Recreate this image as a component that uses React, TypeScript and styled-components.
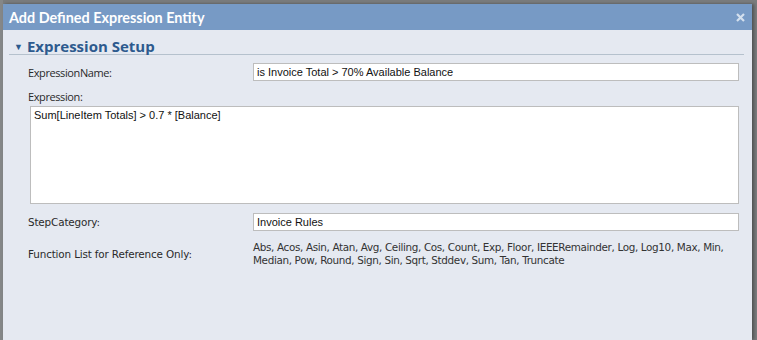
import React from "react";
import styled, { createGlobalStyle } from "styled-components";

const Global = createGlobalStyle`
  html, body { margin: 0; padding: 0; }
  body { background: #7d7f80; width: 757px; height: 340px; overflow: hidden; }
  * { box-sizing: border-box; }
`;

const Backdrop = styled.div`
  width: 757px;
  height: 340px;
  padding: 4px 5px 0 3px;
  background: linear-gradient(90deg, #858788 0, #858788 3px, #7a7c7d 3px);
`;

const Dialog = styled.div`
  height: 336px;
  display: flex;
  flex-direction: column;
  background: #e5e9f1;
  box-shadow: 2px 0 3px rgba(0, 0, 0, 0.35);
`;

const TitleBar = styled.div`
  height: 26px;
  flex: none;
  display: flex;
  align-items: center;
  justify-content: space-between;
  padding: 0 7px 0 6px;
  background: #779ac5;
`;

const Title = styled.span`
  font-family: "Lato", "Open Sans", sans-serif;
  font-weight: 700;
  font-size: 14.4px;
  color: #ffffff;
`;

const Close = styled.span`
  display: flex;
  width: 9px;
  height: 9px;
  margin-top: 1px;
`;

const Body = styled.div`
  flex: 1;
  padding: 4px 8px 0 6px;
`;

const SectionHeader = styled.div`
  display: flex;
  align-items: center;
  gap: 4px;
  height: 21px;
  padding: 3px 0 0 5px;
  border-bottom: 1px solid #b5c1cd;
  font-family: "Open Sans", "Noto Sans", sans-serif;
  font-weight: 700;
  font-size: 15px;
  color: #2d5a8e;
`;

const Caret = styled.span`
  font-size: 9px;
  margin-top: 1px;
`;

const Form = styled.div`
  display: flex;
  flex-direction: column;
  padding: 8px 5px 0 19px;
`;

const Row = styled.div<{ $mt?: number }>`
  display: grid;
  grid-template-columns: 225px 1fr;
  align-items: center;
  margin-top: ${(p) => p.$mt ?? 0}px;
`;

const Label = styled.div<{ $tahoma?: boolean }>`
  font-family: ${(p) => (p.$tahoma ? '"DejaVu Sans"' : '"Open Sans"')}, sans-serif;
  font-size: ${(p) => (p.$tahoma ? "10.4px" : "11px")};
  letter-spacing: ${(p) => (p.$tahoma ? "-0.15px" : "-0.4px")};
  color: #2a2a2a;
`;

const TextInput = styled.div`
  height: 18px;
  background: #fff;
  border: 1px solid #bdbdbd;
  padding: 0 3px;
  font-family: "Liberation Sans", Arial, sans-serif;
  font-size: 11px;
  line-height: 16px;
  color: #111;
`;

const TextArea = styled.div`
  margin: 2px 0 0 2px;
  height: 98px;
  background: #fff;
  border: 1px solid #bdbdbd;
  padding: 2px 3px;
  font-family: "Liberation Sans", Arial, sans-serif;
  font-size: 11px;
  line-height: 13px;
  color: #111;
`;

const FuncList = styled.div`
  font-family: "DejaVu Sans", sans-serif;
  font-size: 10.4px;
  line-height: 13px;
  color: #333;
  letter-spacing: -0.35px;
  padding-top: 1px;
`;

export default function App() {
  return (
    <>
      <Global />
      <Backdrop>
        <Dialog>
          <TitleBar>
            <Title>Add Defined Expression Entity</Title>
            <Close>
              <svg width="9" height="9" viewBox="0 0 9 9">
                <path d="M1 1L8 8M8 1L1 8" stroke="#d4e0ee" strokeWidth="2.2" />
              </svg>
            </Close>
          </TitleBar>
          <Body>
            <SectionHeader>
              <Caret>▼</Caret>
              Expression Setup
            </SectionHeader>
            <Form>
              <Row>
                <Label>ExpressionName:</Label>
                <TextInput>is Invoice Total &gt; 70% Available Balance</TextInput>
              </Row>
              <Row $mt={8}>
                <Label>Expression:</Label>
              </Row>
              <TextArea>Sum[LineItem Totals] &gt; 0.7 * [Balance]</TextArea>
              <Row $mt={9}>
                <Label $tahoma>StepCategory:</Label>
                <TextInput>Invoice Rules</TextInput>
              </Row>
              <Row $mt={9}>
                <Label $tahoma>Function List for Reference Only:</Label>
                <FuncList>
                  Abs, Acos, Asin, Atan, Avg, Ceiling, Cos, Count, Exp, Floor, IEEERemainder, Log, Log10, Max, Min,
                  Median, Pow, Round, Sign, Sin, Sqrt, Stddev, Sum, Tan, Truncate
                </FuncList>
              </Row>
            </Form>
          </Body>
        </Dialog>
      </Backdrop>
    </>
  );
}
